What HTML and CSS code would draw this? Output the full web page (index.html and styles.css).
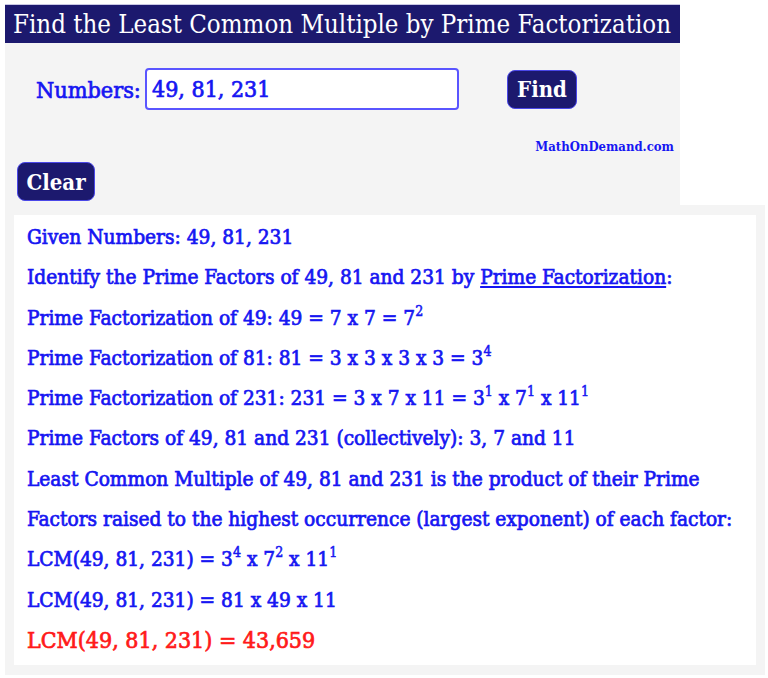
FILE: index.html
```html
<!DOCTYPE html>
<html>
<head>
<meta charset="utf-8">
<link rel="stylesheet" href="styles.css">
</head>
<body>
<div class="page">
  <div class="top">
    <div class="title">Find the Least Common Multiple by Prime Factorization</div>
    <div class="form-row">
      <label class="label">Numbers:</label>
      <div class="input">49, 81, 231</div>
      <button class="btn find">Find</button>
    </div>
    <div class="brand">MathOnDemand.com</div>
    <div class="clear-row"><button class="btn clear">Clear</button></div>
  </div>
  <div class="results">
    <div class="box">
      <p class="line">Given Numbers: 49, 81, 231</p>
      <p class="line">Identify the Prime Factors of 49, 81 and 231 by <a class="link">Prime Factorization</a>:</p>
      <p class="line">Prime Factorization of 49: 49 = 7 x 7 = 7<sup>2</sup></p>
      <p class="line">Prime Factorization of 81: 81 = 3 x 3 x 3 x 3 = 3<sup>4</sup></p>
      <p class="line">Prime Factorization of 231: 231 = 3 x 7 x 11 = 3<sup>1</sup> x 7<sup>1</sup> x 11<sup>1</sup></p>
      <p class="line">Prime Factors of 49, 81 and 231 (collectively): 3, 7 and 11</p>
      <p class="line">Least Common Multiple of 49, 81 and 231 is the product of their Prime</p>
      <p class="line">Factors raised to the highest occurrence (largest exponent) of each factor:</p>
      <p class="line">LCM(49, 81, 231) = 3<sup>4</sup> x 7<sup>2</sup> x 11<sup>1</sup></p>
      <p class="line">LCM(49, 81, 231) = 81 x 49 x 11</p>
      <p class="line answer">LCM(49, 81, 231) = 43,659</p>
    </div>
  </div>
</div>
</body>
</html>
```
FILE: styles.css
```css
html, body {
  margin: 0;
  padding: 0;
  background: #ffffff;
}
body {
  font-family: "DejaVu Serif Condensed", "Liberation Serif", serif;
}
.page {
  padding: 4px 3px 3px 5px;
}
.top {
  width: 675px;
  background: #f4f4f4;
  height: 201px;
  display: flex;
  flex-direction: column;
}
.title {
  background: #1c196e;
  color: #ffffff;
  font-size: 25.6px;
  height: 38px;
  line-height: 38px;
  padding-left: 8px;
  border-top: 1px solid #c9c7e4;
  white-space: nowrap;
  overflow: hidden;
}
.form-row {
  display: flex;
  align-items: center;
  margin-top: 25px;
  padding-left: 31px;
}
.label {
  color: #1616f2;
  font-size: 23.2px;
  -webkit-text-stroke: 0.7px #1616f2;
  width: 109px;
}
.input {
  box-sizing: border-box;
  width: 314px;
  height: 42px;
  border: 2px solid #5a55ff;
  border-radius: 4px;
  background: #ffffff;
  color: #1616f2;
  font-size: 23px;
  -webkit-text-stroke: 0.7px #1616f2;
  line-height: 38px;
  padding-left: 5px;
}
.btn {
  font-family: inherit;
  background: #1c196e;
  color: #ffffff;
  border: 1.5px solid #4a47e8;
  border-radius: 8px;
  font-size: 22px;
  font-weight: bold;
  padding: 0;
  height: 39px;
}
.find {
  width: 70px;
  margin-left: 48px;
}
.brand {
  text-align: right;
  color: #1616f2;
  font-size: 13px;
  font-weight: bold;
  padding-right: 6px;
  margin-top: 29px;
}
.clear-row {
  margin-top: 8px;
  padding-left: 12px;
}
.clear {
  width: 78px;
}
.results {
  width: 742px;
  background: #f4f4f4;
  padding: 10px 9px 10px 9px;
}
.box {
  background: #ffffff;
  padding: 2px 13px 5px 13px;
}
.line {
  margin: 0;
  height: 40.3px;
  line-height: 40px;
  color: #1616f2;
  font-size: 20.7px;
  -webkit-text-stroke: 0.7px #1616f2;
  white-space: nowrap;
}
.line sup {
  font-size: 14px;
  line-height: 0;
  vertical-align: 9px;
  -webkit-text-stroke: 0.5px #1616f2;
}
.link {
  text-decoration: underline;
  color: #1616f2;
}
.answer {
  color: #ff1a1a;
  -webkit-text-stroke: 0.7px #ff1a1a;
  font-size: 23px;
}
```
